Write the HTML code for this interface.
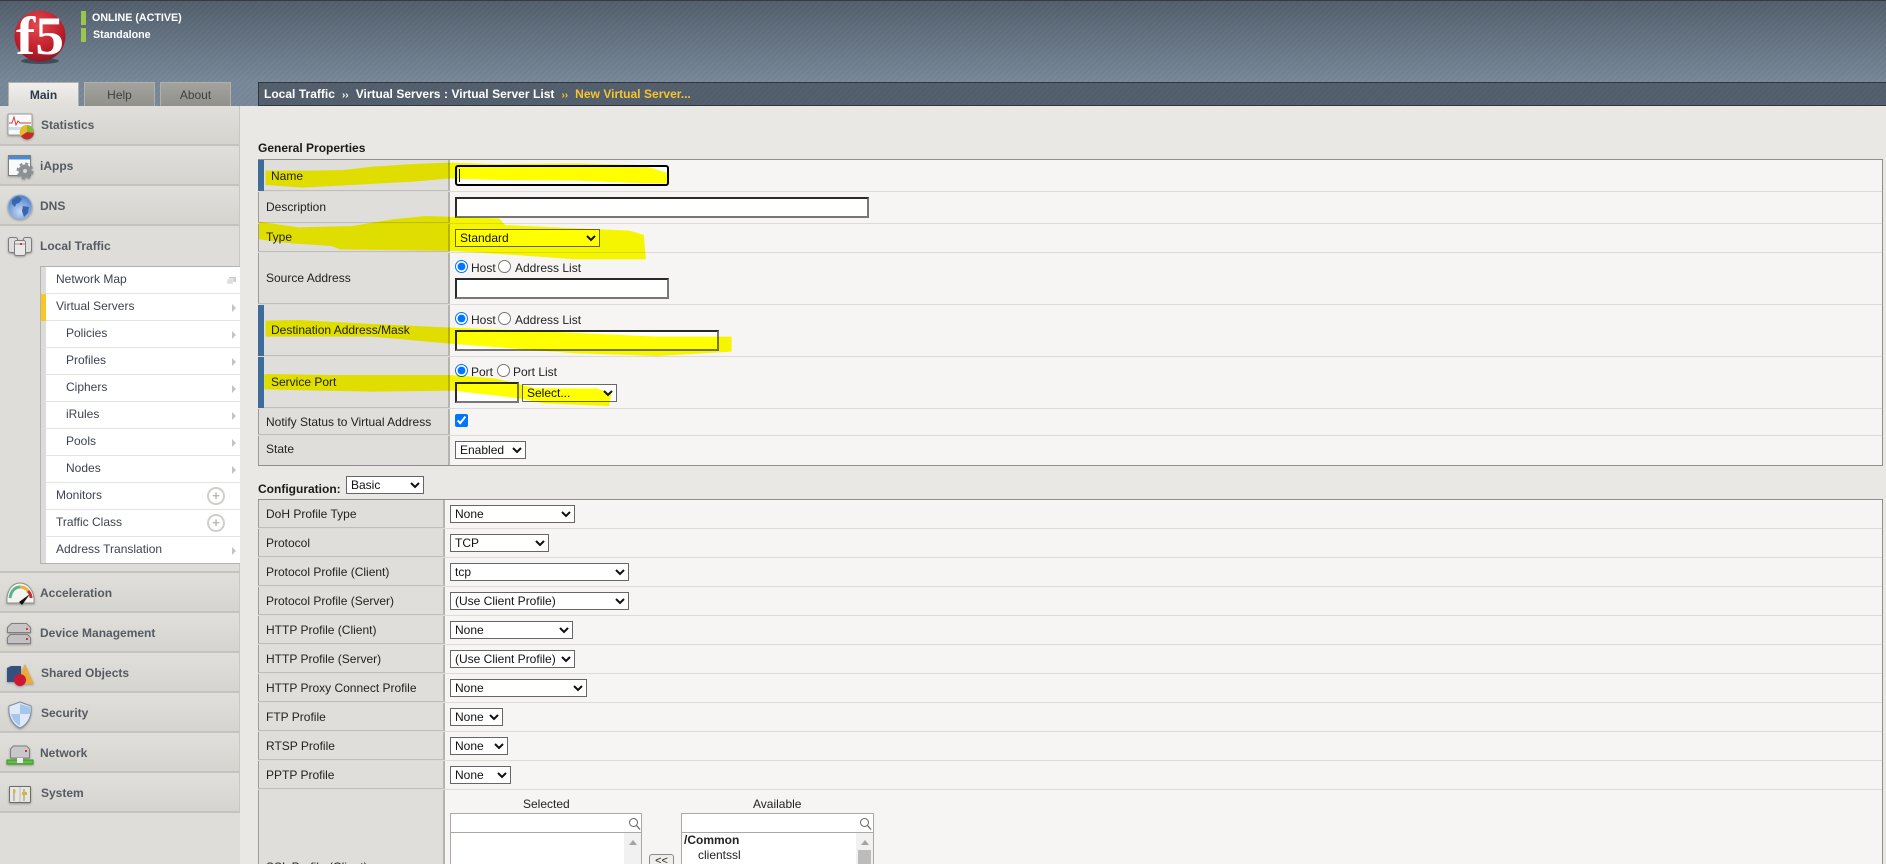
<!DOCTYPE html>
<html lang="en"><head><meta charset="utf-8"><title>BIG-IP New Virtual Server</title>
<style>
*{box-sizing:border-box}
html,body{margin:0;padding:0;width:1886px;height:864px;overflow:hidden;background:#e9e8e4;font:12px/14px "Liberation Sans",Arial,sans-serif;color:#222}
#root{position:absolute;left:0;top:0;width:1886px;height:864px;overflow:hidden}
.a,.t,select,input{position:absolute}
.t{white-space:nowrap}
#hd{position:absolute;left:0;top:0;width:1886px;height:106px;background:repeating-linear-gradient(135deg,rgba(255,255,255,.018) 0 2px,rgba(0,0,0,.018) 2px 4px),linear-gradient(#525e6c 0,#778899 82px,#778899 82px)}
#hd:before{content:"";position:absolute;left:0;top:0;width:100%;height:1px;background:#383a3e}
.tab{position:absolute;top:82px;width:71px;height:24px;text-align:center;line-height:24px;font-size:12px;color:#3f3f3f;background:linear-gradient(#a3a39e,#91918c);border:1px solid #b1b1ac;border-bottom:0}
.tab.on{background:linear-gradient(#f0efec,#dfded9);color:#2d3a4a;font-weight:bold}
#bc{position:absolute;left:258px;top:82px;width:1628px;height:24px;background:repeating-linear-gradient(135deg,rgba(255,255,255,.015) 0 2px,rgba(0,0,0,.015) 2px 4px),#525e6c;border:1px solid #33363a;border-right:0;color:#fff;font-weight:bold;font-size:12px;line-height:22px;padding-left:5px;white-space:pre;word-spacing:.2px}
#bc b{color:#f6c52d}
#sb{position:absolute;left:0;top:106px;width:240px;height:758px;background:#dedddA}
.nav{position:absolute;left:0;width:240px;height:40px;background:linear-gradient(#e0dfdb,#d5d4cf);border-bottom:2px solid #c4c3be;border-right:1px solid #c8c7c2;color:#555b63;font-weight:bold;font-size:12px}
.nav span{position:absolute;top:13px}
.nav svg{position:absolute;left:0;top:0;filter:drop-shadow(0 1px 1px rgba(0,0,0,.3))}
#sub{position:absolute;left:40px;top:266px;width:200px;height:298px;background:#fff;border:1px solid #b4b3ae;border-right:0}
#sub:before{content:"";position:absolute;left:0;top:0;width:5px;height:100%;background:#dcdcda}
.si{position:absolute;left:5px;width:195px;height:27px;border-bottom:1px solid #e4e3e0;color:#3c4350;line-height:25px;padding-left:10px;font-size:12px}
.si.n{padding-left:20px}
.si i{position:absolute;left:186px;top:10px;width:0;height:0;border-left:4px solid #c4c4c4;border-top:4px solid transparent;border-bottom:4px solid transparent}
.pl{position:absolute;left:161px;top:4px;width:18px;height:18px;border:2px solid #cfcfcd;border-radius:50%;color:#b8b8b6;font:bold 13px/13px "Liberation Sans",sans-serif;text-align:center}
.tb{position:absolute;left:258px;width:1625px;background:#f6f5f3;border:1px solid #8f8e8a;border-top-width:2px;border-bottom-width:2px}
.row{position:absolute;left:258px;width:1624px;background:#f6f5f3;border-bottom:1px solid #dcdbd8}
.lb{position:absolute;left:0;top:0;height:100%;background:#dfdeda;border-left:1px solid #9c9b97;border-bottom:1px solid #bfbeba;border-right:2px solid #b4b3ae;padding-left:7px;color:#222}
.lb.req{padding-left:12px}
.lb.req:before{content:"";position:absolute;left:-1px;top:0;bottom:-1px;width:6px;background:#3e6c9b}
.w1 .lb{width:192px}
.w2 .lb{width:187px}
input[type=text]{border:2px solid;border-color:#2a2a2a #777 #777 #2a2a2a;background:#fff;padding:0 2px;margin:0;outline:0}
select{font:12px "Liberation Sans",Arial,sans-serif;height:18px;border:1px solid #666;border-radius:0;background:#fff;color:#111;padding:0;margin:0}
input[type=radio]{margin:0;width:13px;height:13px;accent-color:#0075ff}
input[type=checkbox]{margin:0;width:13px;height:13px;accent-color:#0075ff}
.box{position:absolute;background:#fff;border:1px solid #a9a8a4}
.sc{position:absolute;background:#f1f1f1}
</style></head><body>
<div id="root">

<div id="hd">
<svg class="a" style="left:10px;top:6px" width="62" height="60" viewBox="0 0 62 60">
<defs><radialGradient id="rg" cx="45%" cy="30%" r="75%"><stop offset="0" stop-color="#e04a50"/><stop offset=".6" stop-color="#c2202c"/><stop offset="1" stop-color="#8a1420"/></radialGradient></defs>
<ellipse cx="30" cy="55" rx="19" ry="3" fill="#2f3844" opacity=".7"/>
<circle cx="30" cy="30" r="25.5" fill="url(#rg)"/>
<text x="6" y="48" font-family="'Liberation Serif',serif" font-weight="bold" font-size="54" fill="#fff" textLength="48" lengthAdjust="spacingAndGlyphs">f5</text>
</svg>
<div class="a" style="left:81px;top:11px;width:5px;height:14px;background:#9ac64f"></div>
<div class="a" style="left:81px;top:28px;width:5px;height:14px;background:#9ac64f"></div>
<div class="t" style="left:92px;top:11px;color:#fff;font:bold 10.7px/14px 'Liberation Sans',sans-serif">ONLINE (ACTIVE)</div>
<div class="t" style="left:93px;top:28px;color:#fff;font:bold 10.7px/14px 'Liberation Sans',sans-serif">Standalone</div>
<div class="tab on" style="left:8px">Main</div>
<div class="tab" style="left:84px">Help</div>
<div class="tab" style="left:160px">About</div>
<div id="bc">Local Traffic  <span style="font-size:10px">››</span>  Virtual Servers : Virtual Server List  <b><span style="font-size:10px">››</span>  New Virtual Server...</b></div>
</div>

<div id="sb"></div>

<div class="nav" style="top:106px;height:40px"><svg width="40" height="40"><rect x="8" y="8" width="24" height="21" rx="1" fill="#fafafa" stroke="#9b9b9b"/><path d="M9 17h3l2-6 2 8 2-4 2 2h11" fill="none" stroke="#c8404a"/><rect x="9" y="21" width="22" height="3" fill="#cfdcea"/><circle cx="27" cy="26" r="7" fill="#8ab93a"/><path d="M27 26V19A7 7 0 0 0 21 30Z" fill="#e8b92f"/><path d="M27 26L21 30A7 7 0 0 0 34 27Z" fill="#c5292c"/></svg><span style="left:41px;top:12px">Statistics</span></div>
<div class="nav" style="top:146px"><svg width="40" height="40"><rect x="8.500" y="9.500" width="22" height="20" fill="#fafafa" stroke="#7c8084"/><rect x="9" y="10" width="21" height="3.500" fill="#4c8ad0"/><circle cx="25" cy="25" r="6.500" fill="#8a9094"/><circle cx="25" cy="25" r="7.500" fill="none" stroke="#8a9094" stroke-width="2" stroke-dasharray="3 2.900"/><circle cx="25" cy="25" r="2" fill="#d8d8d6"/></svg><span style="left:40px">iApps</span></div>
<div class="nav" style="top:186px"><svg width="40" height="40"><defs><radialGradient id="gl" cx="50%" cy="70%" r="70%"><stop offset="0" stop-color="#c8dbf6"/><stop offset="1" stop-color="#4a7cc8"/></radialGradient></defs><circle cx="20" cy="21" r="12" fill="url(#gl)" stroke="#9ab0cc"/><path d="M12 14l6-4 4 3-3 4-3 1-1 3-3-3zM23 20l6 1-1 6-4 4-2-6z" fill="#3a66a8"/></svg><span style="left:40px">DNS</span></div>
<div class="nav" style="top:226px;height:347px;background:#dedddA"><svg width="40" height="40"><rect x="8.500" y="11.500" width="9" height="15" rx="2" fill="#ddd" stroke="#7d7d7d"/><rect x="23.500" y="11.500" width="8" height="15" rx="2" fill="#ddd" stroke="#7d7d7d"/><rect x="14.500" y="14.500" width="11" height="15" rx="2" fill="#e8e8e8" stroke="#7d7d7d"/><path d="M15 18h10" stroke="#999"/><rect x="20" y="17" width="2" height="2" fill="#d33"/></svg><span style="left:40px">Local Traffic</span></div>

<div id="sub">
<div class="si" style="top:0">Network Map<svg class="a" style="left:181px;top:10px" width="9" height="7"><rect x="2" y="0" width="7" height="5" fill="#cfcfcf"/><rect x="0" y="2" width="6" height="5" fill="#dcdcdc" stroke="#fff" stroke-width=".5"/></svg></div>
<div class="si" style="top:27px">Virtual Servers<i></i></div>
<div class="a" style="left:0;top:27px;width:5px;height:27px;background:#fcc526"></div>
<div class="si n" style="top:54px">Policies<i></i></div>
<div class="si n" style="top:81px">Profiles<i></i></div>
<div class="si n" style="top:108px">Ciphers<i></i></div>
<div class="si n" style="top:135px">iRules<i></i></div>
<div class="si n" style="top:162px">Pools<i></i></div>
<div class="si n" style="top:189px">Nodes<i></i></div>
<div class="si" style="top:216px">Monitors<div class="pl">+</div></div>
<div class="si" style="top:243px">Traffic Class<div class="pl">+</div></div>
<div class="si" style="top:270px;border-bottom:0">Address Translation<i></i></div>
</div>

<div class="nav" style="top:573px"><svg width="40" height="40"><path d="M7 30C6 18 12 10 20 10s15 8 14 20z" fill="#f4f3ef" stroke="#8e8e8e"/><path d="M10 25C11 18 15 14 20 14" fill="none" stroke="#58b68a" stroke-width="3"/><path d="M20 14c3 0 6 1 8 4" fill="none" stroke="#e8b035" stroke-width="3"/><path d="M28 18c2 2 3 4 3 7" fill="none" stroke="#c92a2a" stroke-width="3"/><path d="M19 29l11-8-8 11z" fill="#111"/></svg><span style="left:40px">Acceleration</span></div>
<div class="nav" style="top:613px"><svg width="40" height="40"><path d="M7.500 14.500l4-4h15l4 4v5h-23z" fill="#c6c6c6" stroke="#7f7f7f"/><path d="M7.500 24.500l3-3h17l3 3v6h-23z" fill="#c2c2c2" stroke="#7f7f7f"/><rect x="26" y="15" width="2" height="2" fill="#d33"/><rect x="26" y="25" width="2" height="2" fill="#d33"/></svg><span style="left:40px">Device Management</span></div>
<div class="nav" style="top:653px"><svg width="40" height="40"><path d="M25 11l9 20H16z" fill="#e6ac3e"/><path d="M7 15l4-2h10v13l-3 3H7z" fill="#34507f"/><circle cx="20" cy="27" r="6" fill="#d01732"/></svg><span style="left:41px">Shared Objects</span></div>
<div class="nav" style="top:693px"><svg width="40" height="40"><path d="M20 9l11 4c1 9-2 18-11 22C11 31 8 22 9 13z" fill="#dfe9f8" stroke="#7a8ba0"/><path d="M20 11v10h10c0-3 0-5 0-7zM20 21v12c-5-3-8-7-9-12z" fill="#a8c6ec"/></svg><span style="left:41px">Security</span></div>
<div class="nav" style="top:733px"><svg width="40" height="40"><path d="M10.500 21v-5l3-3h13l3 3v9h-19z" fill="#c8c8c8" stroke="#7f7f7f"/><rect x="25" y="17" width="2" height="2" fill="#d33"/><rect x="7" y="27" width="26" height="4" fill="#5bc43a" stroke="#3c9228"/><rect x="17" y="25" width="6" height="5" fill="#eee"/></svg><span style="left:40px">Network</span></div>
<div class="nav" style="top:773px"><svg width="40" height="40"><rect x="9.500" y="13.500" width="21" height="16" rx="1" fill="#e8e7df" stroke="#6b6b6b"/><path d="M20 14v15" stroke="#bbb"/><path d="M14 16v12M24 16v12" stroke="#8a8a8a"/><rect x="13" y="17" width="2.500" height="2.500" fill="#d8b82c"/><rect x="22" y="19" width="5" height="3" fill="#d8b82c"/></svg><span style="left:41px">System</span></div>

<div class="t" style="left:258px;top:141px;font-weight:bold;color:#1a1a1a">General Properties</div>

<div class="tb" style="top:159px;height:307px"></div>
<div class="w1">
<div class="row" style="top:160px;height:32px"><div class="lb req" style="line-height:32px">Name</div></div>
<div class="row" style="top:192px;height:32px"><div class="lb" style="line-height:31px">Description</div></div>
<div class="row" style="top:224px;height:29px"><div class="lb" style="line-height:27px">Type</div></div>
<div class="row" style="top:253px;height:52px"><div class="lb" style="line-height:51px">Source Address</div></div>
<div class="row" style="top:305px;height:52px"><div class="lb req" style="line-height:51px">Destination Address/Mask</div></div>
<div class="row" style="top:357px;height:52px"><div class="lb req" style="line-height:51px">Service Port</div></div>
<div class="row" style="top:409px;height:27px"><div class="lb" style="line-height:26px">Notify Status to Virtual Address</div></div>
<div class="row" style="top:436px;height:29px;border-bottom:0"><div class="lb" style="line-height:27px;border-bottom:0">State</div></div>
</div>

<input type="text" style="left:455px;top:165px;width:214px;height:21px;border:2px solid #000;border-radius:3px">
<div class="a" style="left:459px;top:169px;width:1px;height:13px;background:#000"></div>
<input type="text" style="left:455px;top:197px;width:414px;height:21px">
<select style="left:455px;top:229px;width:145px"><option>Standard</option></select>
<input type="radio" checked style="left:455px;top:260px"><span class="t" style="left:471px;top:261px">Host</span>
<input type="radio" style="left:498px;top:260px"><span class="t" style="left:515px;top:261px">Address List</span>
<input type="text" style="left:455px;top:278px;width:214px;height:21px">
<input type="radio" checked style="left:455px;top:312px"><span class="t" style="left:471px;top:313px">Host</span>
<input type="radio" style="left:498px;top:312px"><span class="t" style="left:515px;top:313px">Address List</span>
<input type="text" style="left:455px;top:330px;width:264px;height:21px">
<input type="radio" checked style="left:455px;top:364px"><span class="t" style="left:471px;top:365px">Port</span>
<input type="radio" style="left:497px;top:364px"><span class="t" style="left:513px;top:365px">Port List</span>
<input type="text" style="left:455px;top:382px;width:64px;height:21px">
<select style="left:522px;top:384px;width:95px"><option>Select...</option></select>
<input type="checkbox" checked style="left:455px;top:414px">
<select style="left:455px;top:441px;width:71px"><option>Enabled</option></select>

<div class="t" style="left:258px;top:482px;font-weight:bold;color:#1a1a1a">Configuration:</div>
<select style="left:346px;top:476px;width:78px"><option>Basic</option></select>

<div class="tb" style="top:499px;height:380px"></div>
<div class="w2">
<div class="row" style="top:500px;height:29px"><div class="lb" style="line-height:28px">DoH Profile Type</div></div>
<div class="row" style="top:529px;height:29px"><div class="lb" style="line-height:28px">Protocol</div></div>
<div class="row" style="top:558px;height:29px"><div class="lb" style="line-height:28px">Protocol Profile (Client)</div></div>
<div class="row" style="top:587px;height:29px"><div class="lb" style="line-height:28px">Protocol Profile (Server)</div></div>
<div class="row" style="top:616px;height:29px"><div class="lb" style="line-height:28px">HTTP Profile (Client)</div></div>
<div class="row" style="top:645px;height:29px"><div class="lb" style="line-height:28px">HTTP Profile (Server)</div></div>
<div class="row" style="top:674px;height:29px"><div class="lb" style="line-height:28px">HTTP Proxy Connect Profile</div></div>
<div class="row" style="top:703px;height:29px"><div class="lb" style="line-height:28px">FTP Profile</div></div>
<div class="row" style="top:732px;height:29px"><div class="lb" style="line-height:28px">RTSP Profile</div></div>
<div class="row" style="top:761px;height:29px"><div class="lb" style="line-height:28px">PPTP Profile</div></div>
<div class="row" style="top:790px;height:74px;border-bottom:0"><div class="lb" style="border-bottom:0;padding-top:70px">SSL Profile (Client)</div></div>
</div>

<select style="left:450px;top:505px;width:125px"><option>None</option></select>
<select style="left:450px;top:534px;width:99px"><option>TCP</option></select>
<select style="left:450px;top:563px;width:179px"><option>tcp</option></select>
<select style="left:450px;top:592px;width:179px"><option>(Use Client Profile)</option></select>
<select style="left:450px;top:621px;width:123px"><option>None</option></select>
<select style="left:450px;top:650px;width:125px"><option>(Use Client Profile)</option></select>
<select style="left:450px;top:679px;width:137px"><option>None</option></select>
<select style="left:450px;top:708px;width:53px"><option>None</option></select>
<select style="left:450px;top:737px;width:58px"><option>None</option></select>
<select style="left:450px;top:766px;width:61px"><option>None</option></select>

<div class="t" style="left:523px;top:797px">Selected</div>
<div class="t" style="left:753px;top:797px">Available</div>

<div class="box" style="left:450px;top:813px;width:192px;height:60px"></div>
<div class="a" style="left:451px;top:832px;width:190px;height:1px;background:#a9a8a4"></div>
<div class="sc" style="left:624px;top:833px;width:17px;height:31px"></div>
<svg class="a" style="left:628px;top:817px" width="14" height="14"><circle cx="5.500" cy="5.500" r="4" fill="none" stroke="#666"/><path d="M8.500 8.500l3.500 4" stroke="#666" stroke-width="1.300"/></svg>
<div class="a" style="left:629px;top:840px;width:0;height:0;border-left:4px solid transparent;border-right:4px solid transparent;border-bottom:5px solid #a3a3a3"></div>

<div class="a" style="left:649px;top:854px;width:25px;height:14px;border:1px solid #8a8a86;border-radius:3px;background:#efeeea;text-align:center;font:11px/12px 'Liberation Sans',sans-serif">&lt;&lt;</div>

<div class="box" style="left:681px;top:813px;width:193px;height:60px"></div>
<div class="a" style="left:682px;top:832px;width:191px;height:1px;background:#a9a8a4"></div>
<div class="sc" style="left:856px;top:833px;width:17px;height:31px"></div>
<div class="a" style="left:858px;top:850px;width:13px;height:14px;background:#bcbcbc"></div>
<svg class="a" style="left:859px;top:817px" width="14" height="14"><circle cx="5.500" cy="5.500" r="4" fill="none" stroke="#666"/><path d="M8.500 8.500l3.500 4" stroke="#666" stroke-width="1.300"/></svg>
<div class="a" style="left:861px;top:840px;width:0;height:0;border-left:4px solid transparent;border-right:4px solid transparent;border-bottom:5px solid #a3a3a3"></div>
<div class="t" style="left:684px;top:833px;font-weight:bold">/Common</div>
<div class="t" style="left:698px;top:848px">clientssl</div>

<svg class="a" style="left:0;top:0;mix-blend-mode:multiply;pointer-events:none" width="1886" height="864">
<g transform="translate(250,140) scale(.40816,.33333)" fill="#ffff00">
<path d="M38 92L150 92 230 90 300 80 400 72 490 68 600 72 800 70 960 75 1027 100 1027 130 960 130 800 122 600 120 490 115 400 125 250 135 130 143 38 135Z"/>
<path d="M22 245L120 262 250 258 350 238 430 228 610 235 625 255 800 265 930 272 965 285 970 358 800 358 650 345 500 333 220 328 200 318 100 310 22 298Z"/>
<path d="M38 542L120 540 300 552 480 562 600 568 1000 590 1180 590 1180 635 1000 648 800 640 500 612 300 590 100 590 38 590Z"/>
<path d="M35 702L200 705 490 705 600 715 700 745 850 745 885 760 880 798 720 790 660 775 500 752 300 755 100 750 35 748Z"/>
</g></svg>

</div>
</body></html>
